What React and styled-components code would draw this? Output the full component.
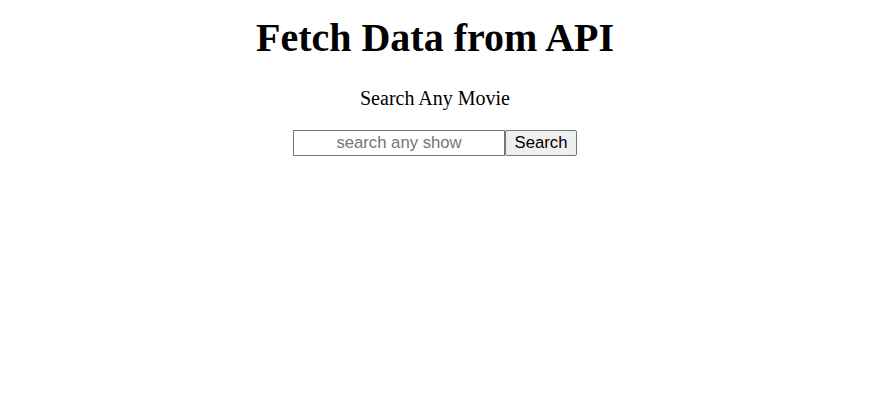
import React, { useState } from "react";
import styled, { createGlobalStyle } from "styled-components";

const GlobalStyle = createGlobalStyle`
  body {
    margin: 8px;
    background: #ffffff;
    font-family: "Liberation Serif", "Times New Roman", serif;
    color: #000000;
  }
`;

const Page = styled.div`
  text-align: center;
`;

const Title = styled.h1`
  font-size: 40px;
  font-weight: bold;
  margin: 7px 0 0;
  line-height: 46px;
`;

const Subtitle = styled.p`
  font-size: 20px;
  margin: 26px 0 0;
  line-height: 23px;
`;

const Form = styled.form`
  display: flex;
  justify-content: center;
  margin-top: 20px;
`;

const SearchInput = styled.input`
  box-sizing: border-box;
  width: 212px;
  height: 26px;
  padding: 1px 2px;
  border: 1px solid #767676;
  border-radius: 0;
  font-family: "Liberation Sans", Arial, sans-serif;
  font-size: 16.7px;
  text-align: center;
  outline: none;

  &::placeholder {
    color: #757575;
  }
`;

const SearchButton = styled.button`
  box-sizing: border-box;
  width: 72px;
  height: 26px;
  padding: 1px 6px;
  background: #efefef;
  border: 1px solid #767676;
  border-radius: 2px;
  font-family: "Liberation Sans", Arial, sans-serif;
  font-size: 16.7px;
  color: #000000;
`;

export default function App() {
  const [query, setQuery] = useState("");

  return (
    <Page>
      <GlobalStyle />
      <Title>Fetch Data from API</Title>
      <Subtitle>Search Any Movie</Subtitle>
      <Form onSubmit={(e) => e.preventDefault()}>
        <SearchInput
          type="text"
          placeholder="search any show"
          value={query}
          onChange={(e) => setQuery(e.target.value)}
        />
        <SearchButton type="submit">Search</SearchButton>
      </Form>
    </Page>
  );
}
